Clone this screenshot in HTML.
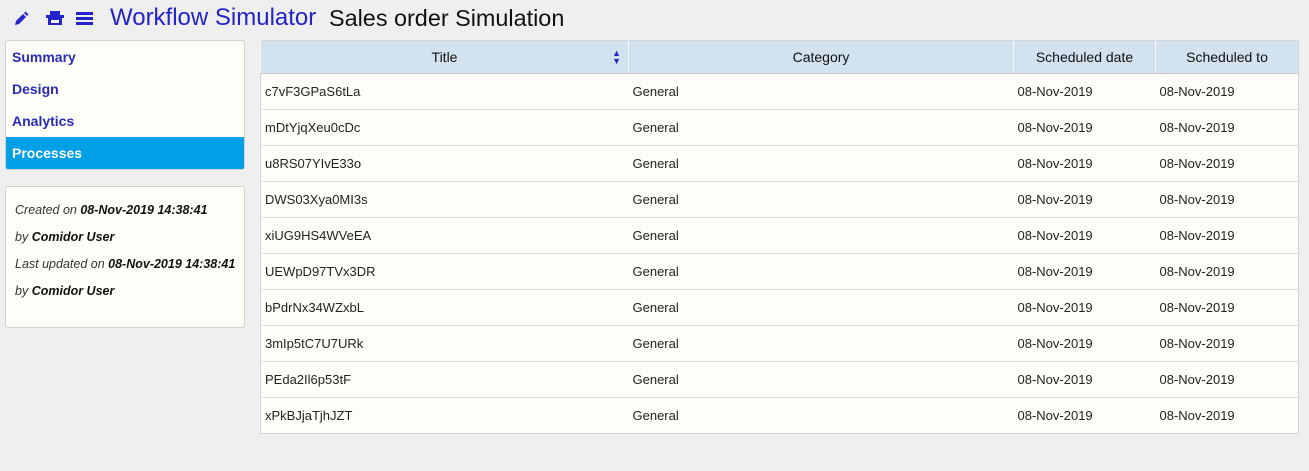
<!DOCTYPE html>
<html><head><style>
body{margin:0;width:1309px;height:471px;background:#efeff0;font-family:"Liberation Sans",sans-serif;position:relative;overflow:hidden}
.top{position:absolute;top:4px;left:14px;height:28px;display:flex;align-items:center}
.t1{position:absolute;left:110px;top:3px;font-size:24px;color:#2323c8;line-height:30px}
.t2{position:absolute;left:329px;top:3px;font-size:23.4px;color:#111;line-height:30px}
.nav{position:absolute;left:5px;top:40px;width:238px;height:128px;background:#fefef9;border:1px solid #d0d0d0;border-radius:3px;overflow:hidden}
.nav div{height:32px;line-height:32px;padding-left:6px;font-size:14px;font-weight:bold;color:#2a2ab8}
.nav .act{background:#009fe6;color:#fff}
.info{position:absolute;left:5px;top:186px;width:238px;height:140px;background:#fefef9;border:1px solid #d0d0d0;border-radius:3px;font-size:12.5px;font-style:italic;color:#333}
.info p{margin:0;position:absolute;left:9px}
.info b{color:#111}
table{position:absolute;left:260px;top:40px;width:1039px;table-layout:fixed;border-collapse:collapse;background:#fefef9;font-size:13px;color:#222;border:1px solid #d4d4d4}
th{background:#d2e2ef;height:32px;padding:0;font-weight:normal;font-size:14px;color:#111;border-left:1px solid #f5f5f5;border-bottom:1px solid #c8c8c8;position:relative}
td{height:35px;padding:0 0 0 4px;border-top:1px solid #dedede}
</style></head><body>
<div class="top">
<svg width="15" height="15" viewBox="0 0 15 15"><path d="M1 14l1-4 7-7 3 3-7 7z" fill="#2323c8"/><path d="M10 2l1.5-1.5 3 3L13 5z" fill="#2323c8"/></svg>
<svg style="margin-left:17px" width="18" height="16" viewBox="0 0 18 16"><rect x="4" y="1" width="10" height="4" fill="#2323c8"/><rect x="0" y="5" width="18" height="3" fill="#2323c8"/><rect x="2" y="8" width="14" height="7" fill="#2323c8"/><rect x="5" y="10" width="8" height="3" fill="#fff"/></svg>
<svg style="margin-left:12px" width="17" height="14" viewBox="0 0 17 14"><rect y="1" width="17" height="3" fill="#2323c8"/><rect y="6" width="17" height="3" fill="#2323c8"/><rect y="11" width="17" height="3" fill="#2323c8"/></svg>
</div>
<div class="t1">Workflow Simulator</div><div class="t2">Sales order Simulation</div>
<div class="nav"><div>Summary</div><div>Design</div><div>Analytics</div><div class="act">Processes</div></div>
<div class="info">
<p style="top:16px">Created on <b>08-Nov-2019 14:38:41</b></p>
<p style="top:43px">by <b>Comidor User</b></p>
<p style="top:70px">Last updated on <b>08-Nov-2019 14:38:41</b></p>
<p style="top:97px">by <b>Comidor User</b></p>
</div>
<table>
<colgroup><col style="width:368px"><col style="width:385px"><col style="width:142px"><col></colgroup>
<tr><th>Title<span style="position:absolute;right:7px;top:8px;font-size:9px;line-height:8px;color:#2323c8">▲<br>▼</span></th><th>Category</th><th>Scheduled date</th><th>Scheduled to</th></tr>
<tr><td>c7vF3GPaS6tLa</td><td>General</td><td>08-Nov-2019</td><td>08-Nov-2019</td></tr>
<tr><td>mDtYjqXeu0cDc</td><td>General</td><td>08-Nov-2019</td><td>08-Nov-2019</td></tr>
<tr><td>u8RS07YIvE33o</td><td>General</td><td>08-Nov-2019</td><td>08-Nov-2019</td></tr>
<tr><td>DWS03Xya0MI3s</td><td>General</td><td>08-Nov-2019</td><td>08-Nov-2019</td></tr>
<tr><td>xiUG9HS4WVeEA</td><td>General</td><td>08-Nov-2019</td><td>08-Nov-2019</td></tr>
<tr><td>UEWpD97TVx3DR</td><td>General</td><td>08-Nov-2019</td><td>08-Nov-2019</td></tr>
<tr><td>bPdrNx34WZxbL</td><td>General</td><td>08-Nov-2019</td><td>08-Nov-2019</td></tr>
<tr><td>3mIp5tC7U7URk</td><td>General</td><td>08-Nov-2019</td><td>08-Nov-2019</td></tr>
<tr><td>PEda2Il6p53tF</td><td>General</td><td>08-Nov-2019</td><td>08-Nov-2019</td></tr>
<tr><td>xPkBJjaTjhJZT</td><td>General</td><td>08-Nov-2019</td><td>08-Nov-2019</td></tr>
</table>
</body></html>
